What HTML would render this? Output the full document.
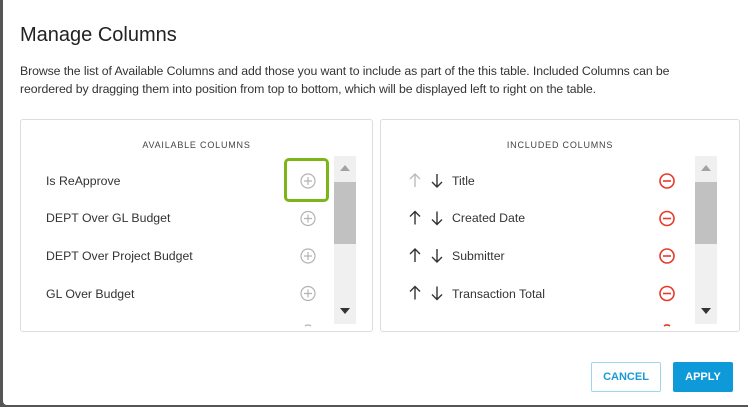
<!DOCTYPE html>
<html><head><style>
*{margin:0;padding:0;box-sizing:border-box}
body{width:748px;height:407px;background:#555;overflow:hidden;font-family:"Liberation Sans",sans-serif;color:#333;position:relative}
.dlg{position:absolute;left:3px;top:0;width:745px;height:405px;background:#fff;border-radius:0 0 0 4px}
.t{position:absolute;left:17px;top:24px;font-size:20px;color:#222}
.d{position:absolute;left:17px;top:63px;font-size:12.3px;line-height:17.5px;color:#333;width:690px;letter-spacing:-0.1px}
.p{position:absolute;top:119px;height:213px;border:1px solid #ddd;border-radius:3px}
.h{position:absolute;top:20px;width:100%;text-align:center;font-size:9px;letter-spacing:.8px;color:#444}
.sb{position:absolute;top:36px;width:22px;height:168px;background:#f0f0f0}
.th{position:absolute;left:0;top:26px;width:22px;height:62px;background:#c1c1c1}
.up{position:absolute;left:6px;top:9px;border-left:5px solid transparent;border-right:5px solid transparent;border-bottom:6px solid #a3a3a3}
.dn{position:absolute;left:6px;top:152px;border-left:5px solid transparent;border-right:5px solid transparent;border-top:6px solid #333}
.r{position:absolute;font-size:12.3px;color:#333}
svg{position:absolute}
.btn{position:absolute;top:362px;height:30px;font-size:11px;font-weight:bold;text-align:center;line-height:28px;border-radius:2px}
</style></head><body>
<div class="dlg">
<div class="t">Manage Columns</div>
<div class="d">Browse the list of Available Columns and add those you want to include as part of the this table. Included Columns can be reordered by dragging them into position from top to bottom, which will be displayed left to right on the table.</div>
</div>
<div class="p" style="left:20px;width:353px">
 <div class="h">AVAILABLE COLUMNS</div>
 <div class="r" style="left:25px;top:54px">Is ReApprove</div>
 <div class="r" style="left:25px;top:91px">DEPT Over GL Budget</div>
 <div class="r" style="left:25px;top:129px">DEPT Over Project Budget</div>
 <div class="r" style="left:25px;top:167px">GL Over Budget</div>
 <div style="position:absolute;left:263px;top:38px;width:45px;height:44px;border:3px solid #7cb518;border-radius:5px"></div>
 <svg width="353" height="213" style="left:-1px;top:-1px" fill="none" stroke="#b3b3b3" stroke-width="1.2">
  <g><circle cx="288" cy="62" r="7"/><path d="M288 58v8M284 62h8"/></g>
  <g><circle cx="288" cy="99.5" r="7"/><path d="M288 95.5v8M284 99.5h8"/></g>
  <g><circle cx="288" cy="137" r="7"/><path d="M288 133v8M284 137h8"/></g>
  <g><circle cx="288" cy="174.5" r="7"/><path d="M288 170.5v8M284 174.5h8"/></g>
  <path d="M285 207a4 3 0 0 1 6 0"/>
 </svg>
 <div class="sb" style="left:313px"><div class="up"></div><div class="th"></div><div class="dn"></div></div>
</div>
<div class="p" style="left:380px;width:360px">
 <div class="h">INCLUDED COLUMNS</div>
 <div class="r" style="left:71px;top:54px">Title</div>
 <div class="r" style="left:71px;top:91px">Created Date</div>
 <div class="r" style="left:71px;top:129px">Submitter</div>
 <div class="r" style="left:71px;top:167px">Transaction Total</div>
 <svg width="360" height="213" style="left:-1px;top:-1px" fill="none" stroke-width="1.4">
  <g stroke="#bbb"><path d="M35 55v13M30 60l5-5 5 5"/></g>
  <g stroke="#333"><path d="M57 55v13M52 63l5 5 5-5"/></g>
  <g stroke="#333"><path d="M35 92.5v13M30 97.5l5-5 5 5M57 92.5v13M52 100.5l5 5 5-5"/></g>
  <g stroke="#333"><path d="M35 130v13M30 135l5-5 5 5M57 130v13M52 138l5 5 5-5"/></g>
  <g stroke="#333"><path d="M35 167.5v13M30 172.5l5-5 5 5M57 167.5v13M52 175.5l5 5 5-5"/></g>
  <g stroke="#e8392b" stroke-width="1.6">
   <circle cx="287" cy="62" r="7"/><path d="M283 62h8"/>
   <circle cx="287" cy="99.5" r="7"/><path d="M283 99.5h8"/>
   <circle cx="287" cy="137" r="7"/><path d="M283 137h8"/>
   <circle cx="287" cy="174.5" r="7"/><path d="M283 174.5h8"/>
   <path d="M284 207a4 3 0 0 1 6 0"/>
  </g>
 </svg>
 <div class="sb" style="left:314px"><div class="up"></div><div class="th"></div><div class="dn"></div></div>
</div>
<div class="btn" style="left:591px;width:70px;border:1px solid #9fd6f0;color:#1a9ad6">CANCEL</div>
<div class="btn" style="left:673px;width:60px;background:#0e9ad9;color:#fff;line-height:30px">APPLY</div>
</body></html>
